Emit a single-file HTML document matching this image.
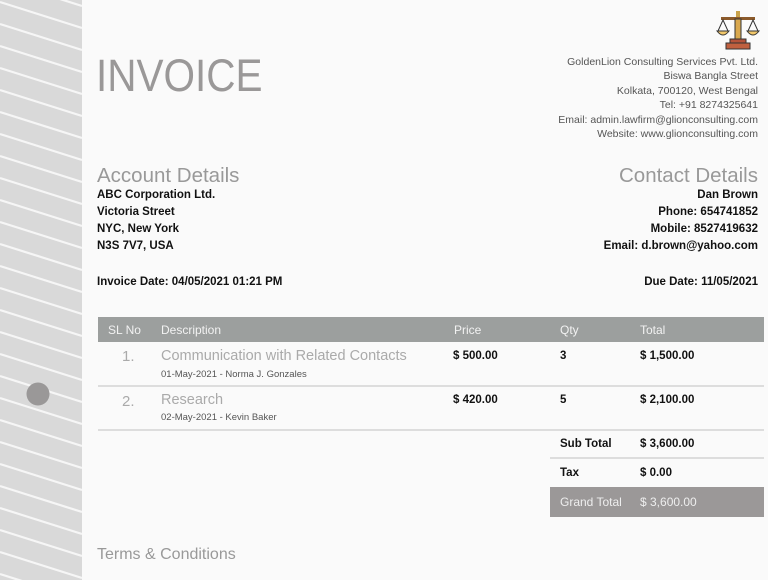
<!DOCTYPE html>
<html><head><meta charset="utf-8"><style>
*{margin:0;padding:0;box-sizing:border-box}
body{width:768px;height:580px;overflow:hidden;background:#fafafa;font-family:"Liberation Sans",sans-serif;position:relative;color:#111}
.a{position:absolute}
.r{text-align:right}
.b{font-weight:bold;font-size:11.5px;line-height:17px}
.co{font-size:10.5px;color:#555;line-height:14.4px}
h2{font-weight:normal;color:#999;font-size:20.5px}
.th{background:#9c9f9e;color:#f2f2f2;font-size:12px}
.line{border-top:2px solid #ddd}
</style></head><body>
<svg class="a" style="left:0;top:0" width="82" height="580">
<rect width="82" height="580" fill="#d9d9d9"/>
<g stroke="#f6f6f6" stroke-width="2.2">
<line x1="0" y1="-20" x2="82" y2="6"/><line x1="0" y1="2" x2="82" y2="28"/><line x1="0" y1="24" x2="82" y2="50"/><line x1="0" y1="46" x2="82" y2="72"/><line x1="0" y1="68" x2="82" y2="94"/><line x1="0" y1="90" x2="82" y2="116"/><line x1="0" y1="112" x2="82" y2="138"/><line x1="0" y1="134" x2="82" y2="160"/><line x1="0" y1="156" x2="82" y2="182"/><line x1="0" y1="178" x2="82" y2="204"/><line x1="0" y1="200" x2="82" y2="226"/><line x1="0" y1="222" x2="82" y2="248"/><line x1="0" y1="244" x2="82" y2="270"/><line x1="0" y1="266" x2="82" y2="292"/><line x1="0" y1="288" x2="82" y2="314"/><line x1="0" y1="310" x2="82" y2="336"/><line x1="0" y1="332" x2="82" y2="358"/><line x1="0" y1="354" x2="82" y2="380"/><line x1="0" y1="376" x2="82" y2="402"/><line x1="0" y1="398" x2="82" y2="424"/><line x1="0" y1="420" x2="82" y2="446"/><line x1="0" y1="442" x2="82" y2="468"/><line x1="0" y1="464" x2="82" y2="490"/><line x1="0" y1="486" x2="82" y2="512"/><line x1="0" y1="508" x2="82" y2="534"/><line x1="0" y1="530" x2="82" y2="556"/><line x1="0" y1="552" x2="82" y2="578"/><line x1="0" y1="574" x2="82" y2="600"/>
</g>
<circle cx="38" cy="394" r="11.5" fill="#9a9898"/>
</svg>
<div class="a" style="left:96px;top:50px;font-size:45px;color:#9a9898;transform:scaleX(0.9);transform-origin:left">INVOICE</div>
<svg class="a" style="left:715px;top:9px" width="46" height="44" viewBox="0 0 44 44">
<rect x="20" y="2" width="4" height="6" fill="#c9a24a"/>
<rect x="5" y="8" width="34" height="3" fill="#8b5a2b"/>
<rect x="19" y="10" width="6" height="20" fill="#d9a84e" stroke="#333" stroke-width="1"/>
<path d="M2 22 L7 11 L12 22 Z M32 22 L37 11 L42 22 Z" fill="none" stroke="#333" stroke-width="1"/>
<path d="M1 22 Q7 30 13 22 Z M31 22 Q37 30 43 22 Z" fill="#f1c76a" stroke="#333" stroke-width="1"/>
<rect x="14" y="30" width="16" height="4" fill="#b5533a" stroke="#333" stroke-width="1"/>
<rect x="10" y="34" width="24" height="6" fill="#c0603f" stroke="#333" stroke-width="1"/>
</svg>
<div class="a r co" style="right:10px;top:55px">GoldenLion Consulting Services Pvt. Ltd.<br>Biswa Bangla Street<br>Kolkata, 700120, West Bengal<br>Tel: +91 8274325641<br>Email: admin.lawfirm@glionconsulting.com<br>Website: www.glionconsulting.com</div>
<h2 class="a" style="left:97px;top:164px">Account Details</h2>
<h2 class="a" style="right:10px;top:164px">Contact Details</h2>
<div class="a b" style="left:97px;top:187px">ABC Corporation Ltd.<br>Victoria Street<br>NYC, New York<br>N3S 7V7, USA</div>
<div class="a b r" style="right:10px;top:187px">Dan Brown<br>Phone: 654741852<br>Mobile: 8527419632<br>Email: d.brown@yahoo.com</div>
<div class="a b" style="left:97px;top:274px">Invoice Date: 04/05/2021 01:21 PM</div>
<div class="a b" style="right:10px;top:274px">Due Date: 11/05/2021</div>
<div class="a th" style="left:98px;top:317px;width:666px;height:25px"></div>
<div class="a th" style="left:108px;top:323px;background:none">SL No</div>
<div class="a th" style="left:161px;top:323px;background:none">Description</div>
<div class="a th" style="left:454px;top:323px;background:none">Price</div>
<div class="a th" style="left:560px;top:323px;background:none">Qty</div>
<div class="a th" style="left:640px;top:323px;background:none">Total</div>
<div class="a" style="left:122px;top:348px;font-size:15px;color:#aaa">1.</div>
<div class="a" style="left:161px;top:348px;font-size:14.5px;color:#aaa">Communication with Related Contacts</div>
<div class="a" style="left:161px;top:369px;font-size:9.5px;color:#555">01-May-2021 - Norma J. Gonzales</div>
<div class="a b" style="left:453px;top:348px">$ 500.00</div>
<div class="a b" style="left:560px;top:348px">3</div>
<div class="a b" style="left:640px;top:348px">$ 1,500.00</div>
<div class="a line" style="left:98px;top:385px;width:666px"></div>
<div class="a" style="left:122px;top:393px;font-size:15px;color:#aaa">2.</div>
<div class="a" style="left:161px;top:392px;font-size:14.5px;color:#aaa">Research</div>
<div class="a" style="left:161px;top:412px;font-size:9.5px;color:#555">02-May-2021 - Kevin Baker</div>
<div class="a b" style="left:453px;top:392px">$ 420.00</div>
<div class="a b" style="left:560px;top:392px">5</div>
<div class="a b" style="left:640px;top:392px">$ 2,100.00</div>
<div class="a line" style="left:98px;top:429px;width:666px"></div>
<div class="a b" style="left:560px;top:436px">Sub Total</div>
<div class="a b" style="left:640px;top:436px">$ 3,600.00</div>
<div class="a line" style="left:550px;top:457px;width:214px"></div>
<div class="a b" style="left:560px;top:465px">Tax</div>
<div class="a b" style="left:640px;top:465px">$ 0.00</div>
<div class="a" style="left:550px;top:487px;width:214px;height:30px;background:#9b9898"></div>
<div class="a" style="left:560px;top:495px;font-size:12px;color:#eee">Grand Total</div>
<div class="a" style="left:640px;top:495px;font-size:12px;color:#eee">$ 3,600.00</div>
<div class="a" style="left:97px;top:546px;font-size:16px;color:#999">Terms &amp; Conditions</div>
</body></html>
